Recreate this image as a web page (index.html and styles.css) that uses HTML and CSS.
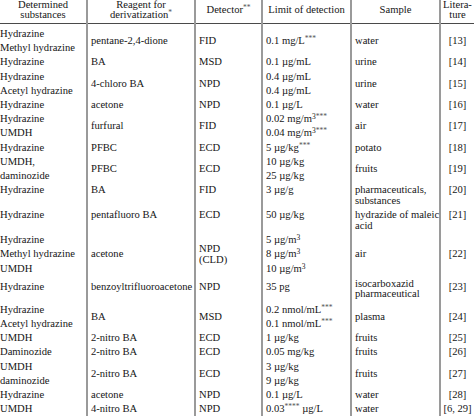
FILE: index.html
```html
<!DOCTYPE html>
<html>
<head>
<meta charset="utf-8">
<link rel="stylesheet" href="styles.css">
</head>
<body>
<table class="t">
<colgroup>
<col class="w1"><col class="w2"><col class="w3"><col class="w4"><col class="w5"><col class="w6">
</colgroup>
<thead>
<tr>
<th>Determined<br>substances</th>
<th>Reagent for<br>derivatization<sup class="ast">*</sup></th>
<th>Detector<sup class="ast">**</sup></th>
<th>Limit of detection</th>
<th>Sample</th>
<th>Litera-<br>ture</th>
</tr>
</thead>
<tbody>
<tr class="first"><td>Hydrazine<br>Methyl hydrazine</td><td>pentane-2,4-dione</td><td>FID</td><td>0.1 mg/L<sup class="ast">***</sup></td><td>water</td><td class="ref">[13]</td></tr>
<tr><td>Hydrazine</td><td>BA</td><td>MSD</td><td>0.1 µg/mL</td><td>urine</td><td class="ref">[14]</td></tr>
<tr><td>Hydrazine<br>Acetyl hydrazine</td><td>4-chloro BA</td><td>NPD</td><td>0.4 µg/mL<br>0.4 µg/mL</td><td>urine</td><td class="ref">[15]</td></tr>
<tr><td>Hydrazine</td><td>acetone</td><td>NPD</td><td>0.1 µg/L</td><td>water</td><td class="ref">[16]</td></tr>
<tr><td>Hydrazine<br>UMDH</td><td>furfural</td><td>FID</td><td>0.02 mg/m<sup>3</sup><sup class="ast">***</sup><br>0.04 mg/m<sup>3</sup><sup class="ast">***</sup></td><td>air</td><td class="ref">[17]</td></tr>
<tr><td>Hydrazine</td><td>PFBC</td><td>ECD</td><td>5 µg/kg<sup class="ast">***</sup></td><td>potato</td><td class="ref">[18]</td></tr>
<tr><td>UMDH,<br>daminozide</td><td>PFBC</td><td>ECD</td><td>10 µg/kg<br>25 µg/kg</td><td>fruits</td><td class="ref">[19]</td></tr>
<tr class="top"><td>Hydrazine</td><td>BA</td><td>FID</td><td>3 µg/g</td><td class="wrap">pharmaceuticals,<br>substances</td><td class="ref">[20]</td></tr>
<tr class="top"><td>Hydrazine</td><td>pentafluoro BA</td><td>ECD</td><td>50 µg/kg</td><td class="wrap">hydrazide of maleic<br>acid</td><td class="ref">[21]</td></tr>
<tr><td>Hydrazine<br>Methyl hydrazine<br>UMDH</td><td>acetone</td><td class="tight">NPD<br>(CLD)</td><td>5 µg/m<sup>3</sup><br>8 µg/m<sup>3</sup><br>10 µg/m<sup>3</sup></td><td>air</td><td class="ref">[22]</td></tr>
<tr class="r11"><td>Hydrazine</td><td>benzoyltrifluoroacetone</td><td>NPD</td><td>35 pg</td><td class="wrap">isocarboxazid<br>pharmaceutical</td><td class="ref">[23]</td></tr>
<tr><td>Hydrazine<br>Acetyl hydrazine</td><td>BA</td><td>MSD</td><td>0.2 nmol/mL<sup class="ast">***</sup><br>0.1 nmol/mL<sup class="ast">***</sup></td><td>plasma</td><td class="ref">[24]</td></tr>
<tr><td>UMDH</td><td>2-nitro BA</td><td>ECD</td><td>1 µg/kg</td><td>fruits</td><td class="ref">[25]</td></tr>
<tr><td>Daminozide</td><td>2-nitro BA</td><td>ECD</td><td>0.05 mg/kg</td><td>fruits</td><td class="ref">[26]</td></tr>
<tr><td>UMDH<br>daminozide</td><td>2-nitro BA</td><td>ECD</td><td>3 µg/kg<br>9 µg/kg</td><td>fruits</td><td class="ref">[27]</td></tr>
<tr><td>Hydrazine</td><td>acetone</td><td>NPD</td><td>0.1 µg/L</td><td>water</td><td class="ref">[28]</td></tr>
<tr><td>UMDH</td><td>4-nitro BA</td><td>NPD</td><td>0.03<sup class="ast">****</sup> µg/L</td><td>water</td><td class="ref">[6, 29]</td></tr>
</tbody>
</table>
</body>
</html>
```

FILE: styles.css
```css
html, body {
  margin: 0;
  padding: 0;
  background: #ffffff;
}

.t {
  border-collapse: collapse;
  table-layout: fixed;
  width: 474px;
  font-family: "Liberation Serif", "Times New Roman", serif;
  font-size: 10.6px;
  color: #161616;
}

.w1 { width: 87px; }
.w2 { width: 108px; }
.w3 { width: 67px; }
.w4 { width: 89px; }
.w5 { width: 89px; }
.w6 { width: 34px; }

th {
  font-weight: normal;
  line-height: 10px;
  padding: 0 0 3px 0;
  vertical-align: middle;
  text-align: center;
  white-space: nowrap;
  border-bottom: 1px solid #4a4a4a;
}

td {
  line-height: 14.2px;
  padding: 0 0 0 3px;
  vertical-align: middle;
  text-align: left;
  white-space: nowrap;
}

th + th,
td + td {
  border-left: 2px solid #9a9a9a;
}

td:first-child {
  padding-left: 0;
}

sup {
  font-size: 7.5px;
  line-height: 0;
  vertical-align: 3px;
}

sup.ast {
  color: #555555;
}

.first td {
  padding-top: 3px;
}

td.ref {
  text-align: center;
  padding-left: 0;
}

.top td {
  vertical-align: top;
}

td.wrap {
  line-height: 10.5px;
  padding-top: 2px;
  padding-bottom: 2px;
}

.r11 td {
  vertical-align: top;
  padding-top: 4px;
}

.r11 td.wrap {
  padding-top: 3px;
  padding-bottom: 3px;
}

td.tight {
  line-height: 10.7px;
}
```
